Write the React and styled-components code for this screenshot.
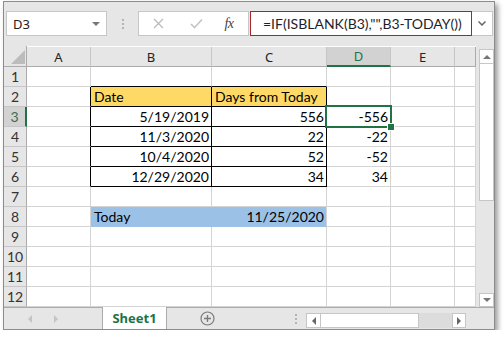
import React from 'react';
import styled, { createGlobalStyle } from 'styled-components';

const GREEN = '#217346';
const YELLOW = '#ffd966';
const BLUE = '#9bc2e6';
const GRID = '#d4d4d4';
const HEAD_LINE = '#ababab';
const CELL_FONT = "Lato, 'Liberation Sans', sans-serif";
const UI_FONT = "'Noto Sans', 'Liberation Sans', sans-serif";

const COLS = [
  { id: 'A', w: 64 },
  { id: 'B', w: 121 },
  { id: 'C', w: 115 },
  { id: 'D', w: 64 },
  { id: 'E', w: 64 },
  { id: 'F', w: 21 },
];
const ROWS = [1, 2, 3, 4, 5, 6, 7, 8, 9, 10, 11, 12];

const DATA = {
  B2: { v: 'Date', fill: YELLOW },
  C2: { v: 'Days from Today', fill: YELLOW },
  B3: { v: '5/19/2019', num: true },
  C3: { v: '556', num: true },
  D3: { v: '-556', num: true },
  B4: { v: '11/3/2020', num: true },
  C4: { v: '22', num: true },
  D4: { v: '-22', num: true },
  B5: { v: '10/4/2020', num: true },
  C5: { v: '52', num: true },
  D5: { v: '-52', num: true },
  B6: { v: '12/29/2020', num: true },
  C6: { v: '34', num: true },
  D6: { v: '34', num: true },
  B8: { v: 'Today', fill: BLUE, rb: BLUE, bb: BLUE },
  C8: { v: '11/25/2020', num: true, fill: BLUE, bb: BLUE },
};

const inTable = (c, r) => (c === 'B' || c === 'C') && r >= 2 && r <= 6;

function borders(c, r) {
  const cell = DATA[c + r] || {};
  let rb = cell.rb || GRID;
  let bb = cell.bb || GRID;
  if (inTable(c, r) || (c === 'A' && r >= 2 && r <= 6)) rb = '#000';
  if (inTable(c, r) || ((c === 'B' || c === 'C') && r === 1)) bb = '#000';
  return { rb, bb };
}

const GlobalStyle = createGlobalStyle`
  html, body {
    margin: 0;
    padding: 0;
    background: #fff;
  }
`;

const Page = styled.div`
  padding: 1px 0 0 3px;
`;

const Window = styled.div`
  width: 492px;
  height: 329px;
  box-sizing: border-box;
  border: 1px solid #8c8c8c;
  background: #e6e6e6;
  box-shadow: 3px 3px 5px rgba(0, 0, 0, 0.38);
  display: flex;
  flex-direction: column;
  overflow: hidden;
`;

/* formula bar */
const Toolbar = styled.div`
  height: 44px;
  flex: none;
  display: flex;
  align-items: flex-start;
  padding: 9px 0 0 2px;
  box-sizing: border-box;
`;

const NameBox = styled.div`
  width: 101px;
  height: 25px;
  box-sizing: border-box;
  background: #fff;
  border: 1px solid #c6c6c6;
  display: flex;
  align-items: center;
  justify-content: space-between;
  padding: 0 6px 0 6px;
  font: 13px ${UI_FONT};
  color: #222;
`;

const DropTri = styled.span`
  width: 0;
  height: 0;
  border-left: 4px solid transparent;
  border-right: 4px solid transparent;
  border-top: 4px solid #777;
`;

const Dots = styled.div`
  width: 31px;
  height: 25px;
  display: flex;
  flex-direction: column;
  align-items: center;
  justify-content: center;
  gap: 2px;

  span {
    width: 2px;
    height: 2px;
    background: #b4b4b4;
  }
`;

const FxButtons = styled.div`
  width: 111px;
  height: 25px;
  box-sizing: border-box;
  background: #fff;
  border: 1px solid #c6c6c6;
  display: flex;
  align-items: center;
  margin-right: 1px;
`;

const FxButton = styled.span`
  width: ${(p) => p.$w}px;
  display: flex;
  justify-content: center;
  align-items: center;
`;

const FxText = styled.span`
  font: italic 14px 'Liberation Serif', serif;
  color: #444;
  letter-spacing: -0.5px;
`;

const FormulaInput = styled.div`
  width: 222px;
  height: 25px;
  box-sizing: border-box;
  background: #fff;
  border: 1px solid #a4262c;
  padding-left: 12px;
  display: flex;
  align-items: center;
  font: 14px ${CELL_FONT};
  color: #1e1e2a;
  white-space: nowrap;
  overflow: hidden;
`;

const FormulaDrop = styled.div`
  width: 21px;
  height: 25px;
  box-sizing: border-box;
  background: #fff;
  border: 1px solid #c6c6c6;
  border-left: none;
  display: flex;
  align-items: center;
  justify-content: center;
`;

/* sheet */
const SheetArea = styled.div`
  display: flex;
  height: 261px;
  flex: none;
`;

const Sheet = styled.div`
  display: grid;
  grid-template-columns: 23px ${COLS.map((c) => c.w + 'px').join(' ')};
  grid-template-rows: 21px repeat(12, 20px);
  background: #fff;
`;

const Corner = styled.div`
  background: #e6e6e6;
  border-right: 1px solid ${HEAD_LINE};
  border-bottom: 1px solid ${HEAD_LINE};
  display: flex;
  align-items: flex-end;
  justify-content: flex-end;
  padding: 0 1px 2px 0;
`;

const ColHead = styled.div`
  background: ${(p) => (p.$sel ? '#d2d2d2' : '#e6e6e6')};
  border-right: 1px solid ${(p) => (p.$last ? HEAD_LINE : '#c6c6c6')};
  border-bottom: ${(p) => (p.$sel ? `2px solid ${GREEN}` : `1px solid ${HEAD_LINE}`)};
  margin-top: 1px;
  display: flex;
  align-items: center;
  justify-content: center;
  font: 13px ${UI_FONT};
  color: ${(p) => (p.$sel ? GREEN : '#222')};
`;

const RowHead = styled.div`
  background: ${(p) => (p.$sel ? '#d2d2d2' : '#e6e6e6')};
  border-right: ${(p) => (p.$sel ? `2px solid ${GREEN}` : `1px solid ${HEAD_LINE}`)};
  border-bottom: 1px solid #c6c6c6;
  display: flex;
  align-items: center;
  justify-content: center;
  font: 14px ${CELL_FONT};
  color: ${(p) => (p.$sel ? '#3f6b50' : '#333')};
  line-height: 1;
`;

const Cell = styled.div`
  position: relative;
  background: ${(p) => p.$fill || '#fff'};
  border-right: 1px solid ${(p) => p.$rb};
  border-bottom: 1px solid ${(p) => p.$bb};
  text-align: ${(p) => (p.$num ? 'right' : 'left')};
  padding: 0 2px 0 3px;
  font: 14px ${CELL_FONT};
  line-height: 20px;
  color: #000;
  white-space: nowrap;
`;

const Selection = styled.div`
  position: absolute;
  top: -2px;
  left: -2px;
  right: -2px;
  bottom: -2px;
  border: 2px solid ${GREEN};
  z-index: 2;
  pointer-events: none;
`;

const FillHandle = styled.div`
  position: absolute;
  right: -5px;
  bottom: -5px;
  width: 6px;
  height: 6px;
  background: ${GREEN};
  border: 1px solid #fff;
`;

const VScrollArea = styled.div`
  width: 18px;
  display: flex;
  flex-direction: column;
  padding: 3px 0 0 3px;
  box-sizing: border-box;
`;

const ScrollBtn = styled.div`
  flex: none;
  width: ${(p) => p.$w || 15}px;
  height: ${(p) => p.$h || 15}px;
  box-sizing: border-box;
  background: #fff;
  border: 1px solid #c6c6c6;
  display: flex;
  align-items: center;
  justify-content: center;
`;

const VThumb = styled.div`
  flex: none;
  width: 15px;
  height: 137px;
  box-sizing: border-box;
  background: #fff;
  border: 1px solid #c6c6c6;
  border-top: none;
`;

const Spacer = styled.div`
  flex: 1;
`;

/* tabs */
const TabBar = styled.div`
  flex: 1;
  display: flex;
  align-items: stretch;
  border-top: 1px solid ${HEAD_LINE};
`;

const NavArea = styled.div`
  width: 98px;
  display: flex;
  align-items: center;
  padding-left: 24px;
  gap: 22px;
  box-sizing: border-box;
`;

const SheetTab = styled.div`
  width: 65px;
  box-sizing: border-box;
  margin-top: -1px;
  background: #fff;
  border-left: 1px solid ${HEAD_LINE};
  border-right: 1px solid ${HEAD_LINE};
  display: flex;
  align-items: center;
  justify-content: center;
  font: bold 13px ${UI_FONT};
  color: ${GREEN};
`;

const AddArea = styled.div`
  width: 122px;
  display: flex;
  align-items: center;
  padding-left: 33px;
  box-sizing: border-box;
`;

const HDots = styled(Dots)`
  width: 14px;
  height: auto;
  padding-top: 1px;
`;

const HScroll = styled.div`
  display: flex;
  align-items: flex-start;
  padding-top: 5px;
  margin-left: 3px;
`;

const HThumb = styled.div`
  width: 98px;
  height: 15px;
  box-sizing: border-box;
  background: #fff;
  border: 1px solid #c6c6c6;
  border-left: none;
`;

const HTrack = styled.div`
  width: 33px;
  height: 15px;
  background: #dcdcdc;
`;

function Tri({ dir, color = '#777', size = 4 }) {
  const pts = {
    up: `0,${size} ${size},0 ${size * 2},${size}`,
    down: `0,0 ${size * 2},0 ${size},${size}`,
    left: `${size},0 ${size},${size * 2} 0,${size}`,
    right: `0,0 ${size},${size} 0,${size * 2}`,
  }[dir];
  const vert = dir === 'up' || dir === 'down';
  return (
    <svg width={vert ? size * 2 : size} height={vert ? size : size * 2}>
      <polygon points={pts} fill={color} />
    </svg>
  );
}

function FormulaBar() {
  return (
    <Toolbar>
      <NameBox>
        D3
        <DropTri />
      </NameBox>
      <Dots>
        <span />
        <span />
        <span />
      </Dots>
      <FxButtons>
        <FxButton $w={38}>
          <svg width="11" height="11" viewBox="0 0 11 11">
            <path d="M1 1 L10 10 M10 1 L1 10" stroke="#b9b9b9" strokeWidth="1.2" fill="none" />
          </svg>
        </FxButton>
        <FxButton $w={39}>
          <svg width="13" height="11" viewBox="0 0 13 11">
            <path d="M1 6 L4.5 9.5 L12 1.5" stroke="#c4c4c4" strokeWidth="1.6" fill="none" />
          </svg>
        </FxButton>
        <FxButton $w={26}>
          <FxText>fx</FxText>
        </FxButton>
      </FxButtons>
      <FormulaInput>=IF(ISBLANK(B3),"",B3-TODAY())</FormulaInput>
      <FormulaDrop>
        <svg width="8" height="5" viewBox="0 0 8 5">
          <path d="M0.5 0.5 L4 4 L7.5 0.5" stroke="#666" strokeWidth="1.5" fill="none" />
        </svg>
      </FormulaDrop>
    </Toolbar>
  );
}

function Grid() {
  return (
    <Sheet>
      <Corner>
        <svg width="14" height="14">
          <polygon points="14,0 14,14 0,14" fill="#bcbcbc" />
        </svg>
      </Corner>
      {COLS.map((c, i) => (
        <ColHead key={c.id} $sel={c.id === 'D'} $last={i === COLS.length - 1}>
          {c.id === 'F' ? '' : c.id}
        </ColHead>
      ))}
      {ROWS.map((r) => (
        <React.Fragment key={r}>
          <RowHead $sel={r === 3}>{r}</RowHead>
          {COLS.map((c) => {
            const cell = DATA[c.id + r] || {};
            const { rb, bb } = borders(c.id, r);
            return (
              <Cell key={c.id} $fill={cell.fill} $num={cell.num} $rb={rb} $bb={bb}>
                {cell.v}
                {c.id + r === 'D3' && (
                  <Selection>
                    <FillHandle />
                  </Selection>
                )}
              </Cell>
            );
          })}
        </React.Fragment>
      ))}
    </Sheet>
  );
}

function VScroll() {
  return (
    <VScrollArea>
      <ScrollBtn>
        <Tri dir="up" size={4} />
      </ScrollBtn>
      <VThumb />
      <Spacer />
      <ScrollBtn $h={14}>
        <Tri dir="down" size={4} />
      </ScrollBtn>
    </VScrollArea>
  );
}

function Tabs() {
  return (
    <TabBar>
      <NavArea>
        <Tri dir="left" color="#c4c4c4" size={4} />
        <Tri dir="right" color="#c4c4c4" size={4} />
      </NavArea>
      <SheetTab>Sheet1</SheetTab>
      <AddArea>
        <svg width="15" height="15" viewBox="0 0 15 15">
          <circle cx="7.5" cy="7.5" r="6.5" stroke="#7a7a7a" strokeWidth="1.2" fill="none" />
          <path d="M7.5 4 V11 M4 7.5 H11" stroke="#7a7a7a" strokeWidth="1.4" />
        </svg>
      </AddArea>
      <HDots>
        <span />
        <span />
        <span />
      </HDots>
      <HScroll>
        <ScrollBtn>
          <Tri dir="left" color="#666" size={4} />
        </ScrollBtn>
        <HThumb />
        <HTrack />
        <ScrollBtn $w={14}>
          <Tri dir="right" color="#666" size={4} />
        </ScrollBtn>
      </HScroll>
    </TabBar>
  );
}

export default function App() {
  return (
    <Page>
      <GlobalStyle />
      <Window>
        <FormulaBar />
        <SheetArea>
          <Grid />
          <VScroll />
        </SheetArea>
        <Tabs />
      </Window>
    </Page>
  );
}
